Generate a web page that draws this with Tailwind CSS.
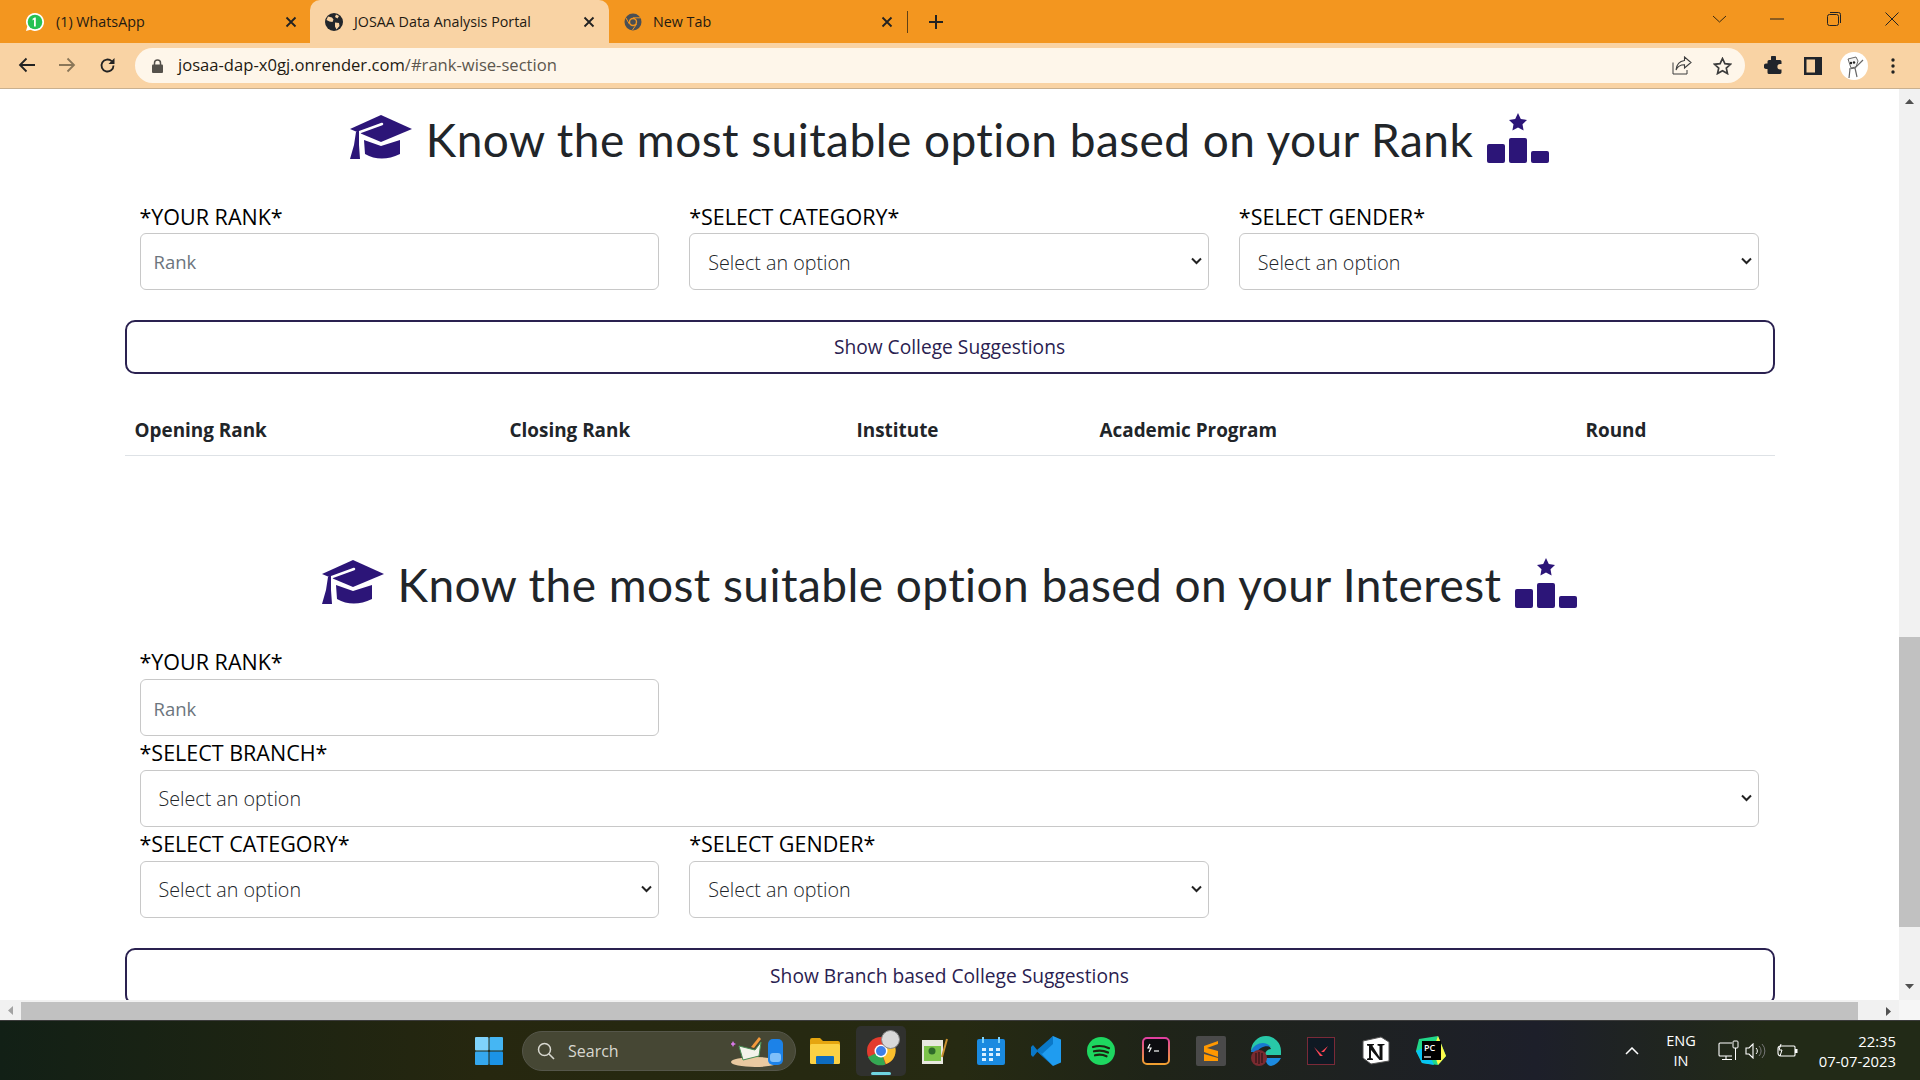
<!DOCTYPE html>
<html lang="en">
<head>
    <meta charset="UTF-8">
    <title>JOSAA Data Analysis Portal</title>
    <script src="https://cdn.jsdelivr.net/npm/@tailwindcss/browser@4"></script>
</head>
<body class="h-[1080px] w-[1920px] overflow-hidden flex flex-col bg-white font-['Open_Sans',sans-serif] text-[#212529]">

    <!-- tab strip -->
    <div class="h-[43px] bg-[#f3961f] flex items-stretch shrink-0 text-[14.3px] text-[#1f1a12]">
        <div class="w-[310px] flex items-center pl-[25px] pr-[13px] gap-[11px]">
            <svg class="w-[20px] h-[20px] shrink-0" viewBox="0 0 20 20"><path d="M10 1a9 9 0 0 0-7.7 13.6L1 19l4.5-1.2A9 9 0 1 0 10 1z" fill="#fff"/><circle cx="10" cy="10" r="7.3" fill="#25c153"/><path d="M10.8 5.5v9H9V7.6L7.6 8.4V6.7l2-1.2z" fill="#fff"/></svg>
            <span class="flex-1">(1) WhatsApp</span>
            <svg class="w-[12px] h-[12px]" viewBox="0 0 12 12"><path d="M1.5 1.5l9 9M10.5 1.5l-9 9" stroke="#222" stroke-width="1.8"/></svg>
        </div>
        <div class="w-[299px] bg-[#f9d3a4] rounded-t-[10px] flex items-center pl-[15px] pr-[14px] gap-[11px]">
            <svg class="w-[18px] h-[18px] shrink-0" viewBox="0 0 18 18"><circle cx="9" cy="9" r="9" fill="#22262b"/><path d="M3 3.5l4 1 1.5 2-1 2.5-3-.5L1.5 7zM10 9.5l4 .5.5 3-3 3.500-1.500-3zM11 1.500l3 1.500-1.500 2.500-2.500-1.500z" fill="#f9d3a4"/></svg>
            <span class="flex-1">JOSAA Data Analysis Portal</span>
            <svg class="w-[12px] h-[12px]" viewBox="0 0 12 12"><path d="M1.5 1.5l9 9M10.5 1.5l-9 9" stroke="#222" stroke-width="1.8"/></svg>
        </div>
        <div class="w-[298px] flex items-center pl-[15px] pr-[14px] gap-[11px]">
            <svg class="w-[18px] h-[18px] shrink-0" viewBox="0 0 18 18"><circle cx="9" cy="9" r="8.5" fill="#4a4f55"/><circle cx="9" cy="9" r="4.2" fill="#f3961f"/><circle cx="9" cy="9" r="2.8" fill="#4a4f55"/><path d="M9 4.8h7.5M5.4 11.1L2 5M12.6 11.1L8.5 17" stroke="#f3961f" stroke-width="1"/></svg>
            <span class="flex-1">New Tab</span>
            <svg class="w-[12px] h-[12px]" viewBox="0 0 12 12"><path d="M1.5 1.5l9 9M10.5 1.5l-9 9" stroke="#222" stroke-width="1.8"/></svg>
        </div>
        <div class="w-px h-[22px] self-center bg-[#5f4015]"></div>
        <div class="w-[55px] flex items-center justify-center">
            <svg class="w-[14px] h-[14px]" viewBox="0 0 14 14"><path d="M7 0v14M0 7h14" stroke="#222" stroke-width="2"/></svg>
        </div>
        <div class="flex-1"></div>
        <div class="flex items-center w-[212px] pb-[5px]">
            <svg class="w-[15px] h-[8px] ml-[4px]" viewBox="0 0 15 8"><path d="M1 1l6.5 6L14 1" fill="none" stroke="#3a2a10" stroke-width="1"/></svg>
            <svg class="w-[14px] h-[2px] ml-[43px]" viewBox="0 0 14 2"><path d="M0 1h14" stroke="#222" stroke-width="1"/></svg>
            <svg class="w-[14px] h-[14px] ml-[43px]" viewBox="0 0 14 14"><rect x=".5" y="2.5" width="11" height="11" rx="2" fill="none" stroke="#222"/><path d="M3 .5h8.5a2 2 0 0 1 2 2V11" fill="none" stroke="#222"/></svg>
            <svg class="w-[14px] h-[14px] ml-[44px]" viewBox="0 0 14 14"><path d="M.5.5l13 13M13.5.5l-13 13" stroke="#222" stroke-width="1"/></svg>
        </div>
    </div>

    <!-- address bar -->
    <div class="h-[46px] bg-[#f9d3a4] border-b border-[#c9b08f] flex items-center shrink-0">
        <div class="w-[135px] flex items-center pl-[18px] gap-[22px] pb-[1px]">
            <svg class="w-[18px] h-[16px]" viewBox="0 0 18 16"><path d="M17 8H2M8.5 1.5L2 8l6.5 6.5" fill="none" stroke="#222" stroke-width="1.8"/></svg>
            <svg class="w-[18px] h-[16px]" viewBox="0 0 18 16"><path d="M1 8h15M9.5 1.5L16 8l-6.5 6.5" fill="none" stroke="#8a7658" stroke-width="1.8"/></svg>
            <svg class="w-[17px] h-[17px] ml-[1px]" viewBox="0 0 17 17"><path d="M14.5 8.5a6 6 0 1 1-1.8-4.3" fill="none" stroke="#222" stroke-width="1.8"/><path d="M15.5 1v6h-6z" fill="#222"/></svg>
        </div>
        <div class="w-[1610px] h-[35px] rounded-full bg-[#fef6ea] flex items-center pl-[17px] pr-[13px]">
            <svg class="w-[11px] h-[14px] shrink-0" viewBox="0 0 11 14"><path d="M2.5 6V4a3 3 0 0 1 6 0v2" fill="none" stroke="#55514b" stroke-width="1.5"/><rect y="5.5" width="11" height="8.5" rx="1" fill="#55514b"/></svg>
            <span class="ml-[15px] text-[16.6px] text-[#1f1a12] flex-1">josaa-dap-x0gj.onrender.com<span class="text-[#5c564e]">/#rank-wise-section</span></span>
            <svg class="w-[20px] h-[19px]" viewBox="0 0 20 19"><path d="M1 6.5V18h14v-4" fill="none" stroke="#3d3d3d" stroke-width="1"/><path d="M12.5 1l6.5 5.5-6.500 5.500V8.800C8 8.800 5.500 10.500 4 14c.5-5 3.500-8.800 8.500-9.500z" fill="none" stroke="#3d3d3d" stroke-width="1.1"/></svg>
            <svg class="w-[19px] h-[18px] ml-[21px]" viewBox="0 0 19 18"><path d="M9.5 1.5l2.4 5.2 5.6.6-4.2 3.8 1.2 5.5-5-2.8-5 2.8 1.2-5.5L1.5 7.3l5.6-.6z" fill="none" stroke="#3d3d3d" stroke-width="1.7"/></svg>
        </div>
        <div class="flex items-center pl-[19px]">
            <svg class="w-[19px] h-[19px]" viewBox="0 0 19 19"><path d="M7 1.5a2.5 2.5 0 0 1 5 0V4h4a1.5 1.5 0 0 1 1.5 1.5V8h-1.300a2.800 2.800 0 0 0 0 5.600h1.300v3A1.500 1.500 0 0 1 16 18H5a1.500 1.500 0 0 1-1.500-1.500V13H2.500a2.800 2.800 0 0 1 0-5.600h1V5.500A1.500 1.500 0 0 1 5 4h2z" fill="#20242b"/></svg>
            <svg class="w-[18px] h-[18px] ml-[21px]" viewBox="0 0 18 18"><rect width="18" height="18" fill="#20242b"/><rect x="2.5" y="2.5" width="8.5" height="13" fill="#f9d3a4"/></svg>
            <div class="w-[28px] h-[28px] rounded-full bg-white ml-[18px] flex items-center justify-center overflow-hidden">
                <svg class="w-[26px] h-[26px]" viewBox="0 0 26 26"><path d="M7 6l8-2 2 4-2 6-5 1z" fill="#f4f4f4" stroke="#444" stroke-width=".8"/><circle cx="10" cy="10" r="1.2" fill="#222"/><circle cx="13" cy="9.5" r="1.2" fill="#222"/><path d="M8 16l6-1 8-8M9 16l-1 9M14 15l2 9" fill="none" stroke="#666" stroke-width="1.2"/></svg>
            </div>
            <svg class="w-[4px] h-[16px] ml-[23px]" viewBox="0 0 4 16"><circle cx="2" cy="2" r="1.7" fill="#222"/><circle cx="2" cy="8" r="1.7" fill="#222"/><circle cx="2" cy="14" r="1.7" fill="#222"/></svg>
        </div>
    </div>

    <!-- page viewport -->
    <div class="flex-1 min-h-0 flex overflow-hidden">
        <main class="flex-1 min-w-0 overflow-hidden">
            <div class="w-[1650px] mx-auto">

                <!-- rank section -->
                <h2 class="h-[117px] pb-[15px] flex items-center justify-center gap-[14px] text-[46px] leading-none font-['Lato',sans-serif] tracking-[0.45px]">
                    <svg class="w-[62px] h-[46px] mb-[4px]" viewBox="0 0 62 46" fill="#2c1578"><path d="M0 14L31 0l31 14-31 13z"/><path d="M9 20l1-3 22-8" fill="none" stroke="#fff" stroke-width="2.5" stroke-linecap="round"/><path d="M14 25l17 6 19-6v14q-19 9-35 0z"/><path d="M6 17l3-1v14l1 14H0l4-14z"/></svg>
                    <span>Know the most suitable option based on your Rank</span>
                    <svg class="w-[62px] h-[50px] mb-[4px]" viewBox="0 0 62 50" fill="#2c1578"><path d="M31 0l2.8 6 6.2.9-4.500 4.400 1.100 6.200-5.600-3-5.600 3 1.100-6.200L22 6.900l6.200-.9z"/><rect y="31" width="18" height="19" rx="2"/><rect x="22" y="25" width="18" height="25" rx="2"/><rect x="44" y="38" width="18" height="12" rx="2"/></svg>
                </h2>

                <div class="pl-[15px] pr-[16px] grid grid-cols-3 gap-x-[30px]">
                    <div>
                        <label class="block h-[27px] text-[21.5px] leading-[22px] font-medium text-black">*YOUR RANK*</label>
                        <input type="text" placeholder="Rank" class="w-full h-[57px] border border-[#c8c8c8] rounded-[6px] px-[13px] text-[18.5px] placeholder:text-[#6c757d]">
                    </div>
                    <div>
                        <label class="block h-[27px] text-[21.5px] leading-[22px] font-medium text-black">*SELECT CATEGORY*</label>
                        <div class="relative">
                            <select class="w-full h-[57px] border border-[#c8c8c8] rounded-[6px] pl-[18px] pt-[3px] text-[19.7px] font-light appearance-none bg-white"><option>Select an option</option></select>
                            <svg class="absolute right-[7px] top-[24px] w-[11px] h-[8px]" viewBox="0 0 11 8"><path d="M1 1.5L5.5 6 10 1.5" fill="none" stroke="#222" stroke-width="2"/></svg>
                        </div>
                    </div>
                    <div>
                        <label class="block h-[27px] text-[21.5px] leading-[22px] font-medium text-black">*SELECT GENDER*</label>
                        <div class="relative">
                            <select class="w-full h-[57px] border border-[#c8c8c8] rounded-[6px] pl-[18px] pt-[3px] text-[19.7px] font-light appearance-none bg-white"><option>Select an option</option></select>
                            <svg class="absolute right-[7px] top-[24px] w-[11px] h-[8px]" viewBox="0 0 11 8"><path d="M1 1.5L5.5 6 10 1.5" fill="none" stroke="#222" stroke-width="2"/></svg>
                        </div>
                    </div>
                </div>

                <button class="block w-full h-[54px] mt-[30px] border-[2.5px] border-[#2a2150] rounded-[10px] text-[19.2px] text-[#2a2150]">Show College Suggestions</button>

                <table class="w-full table-fixed mt-[31px]">
                    <thead>
                        <tr class="h-[50px] border-b border-[#dee2e6] text-left text-[18.9px]">
                            <th class="w-[375px] pl-[10px] font-bold">Opening Rank</th>
                            <th class="w-[347px] pl-[10px] font-bold">Closing Rank</th>
                            <th class="w-[243px] pl-[10px] font-bold">Institute</th>
                            <th class="w-[486px] pl-[10px] font-bold">Academic Program</th>
                            <th class="pl-[10px] font-bold">Round</th>
                        </tr>
                    </thead>
                </table>

                <!-- interest section -->
                <h2 class="h-[117px] mt-[79px] pb-[16px] flex items-center justify-center gap-[14px] text-[46px] leading-none font-['Lato',sans-serif] tracking-[0.45px]">
                    <svg class="w-[62px] h-[46px] mb-[4px]" viewBox="0 0 62 46" fill="#2c1578"><path d="M0 14L31 0l31 14-31 13z"/><path d="M9 20l1-3 22-8" fill="none" stroke="#fff" stroke-width="2.5" stroke-linecap="round"/><path d="M14 25l17 6 19-6v14q-19 9-35 0z"/><path d="M6 17l3-1v14l1 14H0l4-14z"/></svg>
                    <span>Know the most suitable option based on your Interest</span>
                    <svg class="w-[62px] h-[50px] mb-[4px]" viewBox="0 0 62 50" fill="#2c1578"><path d="M31 0l2.8 6 6.2.9-4.500 4.400 1.100 6.200-5.600-3-5.600 3 1.100-6.200L22 6.900l6.200-.9z"/><rect y="31" width="18" height="19" rx="2"/><rect x="22" y="25" width="18" height="25" rx="2"/><rect x="44" y="38" width="18" height="12" rx="2"/></svg>
                </h2>

                <div class="pl-[15px] pr-[16px] grid grid-cols-3 gap-x-[30px]">
                    <div>
                        <label class="block h-[27px] text-[21.5px] leading-[20px] font-medium text-black">*YOUR RANK*</label>
                        <input type="text" placeholder="Rank" class="w-full h-[57px] border border-[#c8c8c8] rounded-[6px] px-[13px] pt-[2px] text-[18.5px] placeholder:text-[#6c757d]">
                    </div>
                    <div class="col-span-3 pt-[4px]">
                        <label class="block h-[30px] text-[21.5px] leading-[26px] font-medium text-black">*SELECT BRANCH*</label>
                        <div class="relative">
                            <select class="w-full h-[57px] border border-[#c8c8c8] rounded-[6px] pl-[18px] pt-[2px] text-[19.7px] font-light appearance-none bg-white"><option>Select an option</option></select>
                            <svg class="absolute right-[7px] top-[24px] w-[11px] h-[8px]" viewBox="0 0 11 8"><path d="M1 1.5L5.5 6 10 1.5" fill="none" stroke="#222" stroke-width="2"/></svg>
                        </div>
                    </div>
                    <div class="pt-[4px]">
                        <label class="block h-[30px] text-[21.5px] leading-[26px] font-medium text-black">*SELECT CATEGORY*</label>
                        <div class="relative">
                            <select class="w-full h-[57px] border border-[#c8c8c8] rounded-[6px] pl-[18px] pt-[2px] text-[19.7px] font-light appearance-none bg-white"><option>Select an option</option></select>
                            <svg class="absolute right-[7px] top-[24px] w-[11px] h-[8px]" viewBox="0 0 11 8"><path d="M1 1.5L5.5 6 10 1.5" fill="none" stroke="#222" stroke-width="2"/></svg>
                        </div>
                    </div>
                    <div class="pt-[4px]">
                        <label class="block h-[30px] text-[21.5px] leading-[26px] font-medium text-black">*SELECT GENDER*</label>
                        <div class="relative">
                            <select class="w-full h-[57px] border border-[#c8c8c8] rounded-[6px] pl-[18px] pt-[2px] text-[19.7px] font-light appearance-none bg-white"><option>Select an option</option></select>
                            <svg class="absolute right-[7px] top-[24px] w-[11px] h-[8px]" viewBox="0 0 11 8"><path d="M1 1.5L5.5 6 10 1.5" fill="none" stroke="#222" stroke-width="2"/></svg>
                        </div>
                    </div>
                </div>

                <button class="block w-full h-[57px] mt-[30px] border-[2.5px] border-[#2a2150] rounded-[10px] text-[19.2px] text-[#2a2150]">Show Branch based College Suggestions</button>
            </div>
        </main>

        <!-- vertical scrollbar -->
        <div class="w-[21px] shrink-0 bg-[#f1f1f1] flex flex-col items-center">
            <svg class="w-[9px] h-[5px] mt-[10px]" viewBox="0 0 9 5"><path d="M4.5 0L9 5H0z" fill="#505050"/></svg>
            <div class="w-full h-[290px] mt-[533px] bg-[#c1c1c1]"></div>
            <svg class="w-[9px] h-[5px] mt-[57px]" viewBox="0 0 9 5"><path d="M4.5 5L9 0H0z" fill="#505050"/></svg>
        </div>
    </div>

    <!-- horizontal scrollbar -->
    <div class="h-[20px] shrink-0 flex bg-[#f1f1f1]">
        <div class="w-[21px] flex items-center justify-center"><svg class="w-[5px] h-[9px]" viewBox="0 0 5 9"><path d="M0 4.5L5 0v9z" fill="#a3a3a3"/></svg></div>
        <div class="w-[1837px] h-[18px] mt-[2px] bg-[#c1c1c1]"></div>
        <div class="w-[41px] flex items-center justify-end pr-[8px] pt-[2px]"><svg class="w-[5px] h-[9px]" viewBox="0 0 5 9"><path d="M5 4.5L0 0v9z" fill="#505050"/></svg></div>
        <div class="w-[21px] bg-[#f6f6f6]"></div>
    </div>

    <!-- windows taskbar -->
    <div class="h-[60px] shrink-0 border-t border-[#3b3b3b] bg-[linear-gradient(90deg,#122016_0%,#26270f_25%,#262a12_50%,#1f2418_60%,#1d1f2a_80%,#222a17_92%,#222a17_100%)] flex items-center text-white">
        <div class="w-[475px] shrink-0"></div>
        <svg class="w-[28px] h-[28px] shrink-0" viewBox="0 0 28 28"><rect width="13.5" height="13.5" rx="1" fill="#7fd3fb"/><rect x="14.5" width="13.5" height="13.5" rx="1" fill="#45b6f3"/><rect y="14.5" width="13.5" height="13.5" rx="1" fill="#35a8ee"/><rect x="14.5" y="14.5" width="13.5" height="13.5" rx="1" fill="#1b93e6"/></svg>

        <div class="w-[274px] h-[40px] ml-[19px] rounded-full bg-[#464734] border border-[#55564a] flex items-center pl-[14px] text-[#d8d8d0] text-[16px] gap-[13px] shrink-0">
            <svg class="w-[18px] h-[18px]" viewBox="0 0 18 18"><circle cx="7.5" cy="7.5" r="6" fill="none" stroke="#d8d8d0" stroke-width="1.5"/><path d="M12 12l5 5" stroke="#d8d8d0" stroke-width="1.6"/></svg>
            <span class="flex-1">Search</span>
            <svg class="w-[58px] h-[34px] mr-[6px]" viewBox="0 0 58 34"><ellipse cx="24" cy="28" rx="24" ry="5" fill="#e9c9a0"/><path d="M8 12l16 4 6-8-2 14-16 4z" fill="#f3f3ea" stroke="#4a8f55" stroke-width="1"/><path d="M2 7l1 2 2 1-2 1-1 2-1-2-2-1 2-1z" fill="#d878e8"/><path d="M28 3l2 2-7 9-3-1z" fill="#f49a3c"/><rect x="37" y="5" width="15" height="26" rx="5" fill="#1c82e8"/><rect x="39" y="19" width="11" height="9" rx="3" fill="#7fc0fa"/></svg>
        </div>

        <div class="ml-[13px] w-[32px] flex justify-center shrink-0">
            <svg class="w-[30px] h-[27px]" viewBox="0 0 30 27"><path d="M0 3a2 2 0 0 1 2-2h8l3 3h15a2 2 0 0 1 2 2v4H0z" fill="#e5a50f"/><rect y="7" width="30" height="20" rx="1.5" fill="#fbd144"/><rect x="6" y="19" width="18" height="8" rx="1" fill="#0d6cc0"/></svg>
        </div>
        <div class="ml-[15px] w-[50px] h-[50px] rounded-[5px] bg-[#30312e] flex flex-col items-center justify-center relative shrink-0">
            <svg class="w-[30px] h-[30px]" viewBox="0 0 30 30"><circle cx="15" cy="15" r="14" fill="#e33b2e"/><path d="M15 15L28 8a14 14 0 0 1-8 20z" fill="#fbc02d"/><path d="M15 15l4.5 13.5A14 14 0 0 1 2 21z" fill="#34a853"/><circle cx="15" cy="15" r="6.5" fill="#fff"/><circle cx="15" cy="15" r="5" fill="#3f7fe8"/></svg>
            <div class="absolute top-[4px] right-[6px] w-[19px] h-[19px] rounded-full bg-[#d8d8d8] border border-[#888]"></div>
            <div class="absolute bottom-[1px] w-[20px] h-[3px] rounded-full bg-[#6fd5df]"></div>
        </div>
        <div class="ml-[6px] w-[44px] flex justify-center shrink-0">
            <svg class="w-[28px] h-[28px]" viewBox="0 0 28 28"><rect x="2" y="3" width="21" height="24" fill="#e8e8e0"/><rect x="4" y="9" width="17" height="15" fill="#7cc34a"/><circle cx="12" cy="14" r="3.5" fill="#2f6b2a"/><path d="M22 20L27 2" stroke="#c89030" stroke-width="2"/></svg>
        </div>
        <div class="ml-[13px] w-[44px] flex justify-center shrink-0">
            <svg class="w-[28px] h-[28px]" viewBox="0 0 28 28"><rect y="2" width="28" height="26" rx="2" fill="#1a8ae0"/><rect x="5" width="2" height="6" fill="#7fd3fb"/><rect x="21" width="2" height="6" fill="#7fd3fb"/><path d="M5 11h4v3H5zM12 11h4v3h-4zM19 11h4v3h-4zM5 16h4v3H5zM12 16h4v3h-4zM19 16h4v3h-4zM5 21h4v3H5zM12 21h4v3h-4z" fill="#d9efff"/></svg>
        </div>
        <div class="ml-[11px] w-[44px] flex justify-center shrink-0">
            <svg class="w-[30px] h-[30px]" viewBox="0 0 30 30"><path d="M22 0l8 3.5v23L22 30 8 16.5z" fill="#1f9cf0"/><path d="M22 0L6 14l5 4L22 8z" fill="#0a78c8"/><path d="M22 30L1 11l-1 2 5 3 2-2 15 16z" fill="#0a78c8"/><path d="M2 9L0 11v8l2 2 5-6z" fill="#0a78c8"/></svg>
        </div>
        <div class="ml-[11px] w-[44px] flex justify-center shrink-0">
            <svg class="w-[28px] h-[28px]" viewBox="0 0 28 28"><circle cx="14" cy="14" r="14" fill="#1ed760"/><path d="M6 10c5-1.5 11-1.200 16 1.200M7 14.300c4.500-1.200 9.500-1 14 1.200M8 18.300c4-1 8-.7 11.500 1" fill="none" stroke="#1d2410" stroke-width="2.2" stroke-linecap="round"/></svg>
        </div>
        <div class="ml-[11px] w-[44px] flex justify-center shrink-0">
            <svg class="w-[28px] h-[28px]" viewBox="0 0 28 28"><defs><linearGradient id="term" x1="0" y1="0" x2="0" y2="1"><stop offset="0" stop-color="#e040a0"/><stop offset="1" stop-color="#f0a030"/></linearGradient></defs><rect x="1" y="1" width="26" height="26" rx="4" fill="#0c0c10" stroke="url(#term)" stroke-width="2"/><path d="M8 7L6 11h3l-2 4" fill="none" stroke="#fff" stroke-width="1.2"/><path d="M12 14h5" stroke="#fff" stroke-width="1.2"/></svg>
        </div>
        <div class="ml-[11px] w-[44px] flex justify-center shrink-0">
            <svg class="w-[30px] h-[30px]" viewBox="0 0 30 30"><rect width="30" height="30" rx="2" fill="#4a4a4a"/><path d="M22 5L8 10v6l14 5v-6L11 12l11-4zM8 18l14 4v3L8 25z" fill="#ff9800"/></svg>
        </div>
        <div class="ml-[11px] w-[44px] flex justify-center shrink-0">
            <svg class="w-[30px] h-[30px]" viewBox="0 0 30 30"><path d="M0 15a15 15 0 0 1 30 0v4H14a6 6 0 0 1 6-6C18 7 8 6 0 15z" fill="#28c8a8"/><path d="M0 15C4 7 14 4 20 11c-6-2-12 1-14 5H0z" fill="#1878d0"/><path d="M14 22h16a15 15 0 0 1-10 8c-3 0-5-3-6-8z" fill="#1c8ae0"/><circle cx="8" cy="22" r="8" fill="#7a2a30"/><path d="M5 17v10M8 16v12M11 17v10" stroke="#2a1416" stroke-width="1.2"/></svg>
        </div>
        <div class="ml-[11px] w-[44px] flex justify-center shrink-0">
            <svg class="w-[28px] h-[28px]" viewBox="0 0 28 28"><rect x=".5" y=".5" width="27" height="27" fill="#0f1923" stroke="#7a2a38"/><path d="M7 10l6 9h3zM21 9l-4 6h-3z" fill="#ff4655"/></svg>
        </div>
        <div class="ml-[11px] w-[44px] flex justify-center shrink-0">
            <svg class="w-[28px] h-[29px]" viewBox="0 0 28 29"><path d="M1 5L19 1l8 5v19l-18 3-8-6z" fill="#fff" stroke="#555" stroke-width="1"/><path d="M5 8h7v1l-1.5.5V10l7 11V10l-2-.5V8h7v1l-2 .5V24h-3L9 14v8l2 .7V24H5v-1.3l2-.7V10l-2-.5z" fill="#111"/></svg>
        </div>
        <div class="ml-[11px] w-[44px] flex justify-center shrink-0">
            <svg class="w-[30px] h-[30px]" viewBox="0 0 30 30"><path d="M3 3L22 0l8 20-8 9-16-2L0 15z" fill="#21d789"/><path d="M22 0l8 20-8 9-5-15z" fill="#fcf84a"/><path d="M0 15l6 12 12 2-8-18z" fill="#07c3f2"/><rect x="6" y="5" width="19" height="19" fill="#000"/><text x="8" y="15" fill="#fff" font-size="9" font-family="Open Sans" font-weight="600">PC</text><path d="M8 21h7" stroke="#fff" stroke-width="1.2"/></svg>
        </div>

        <div class="flex-1"></div>
        <svg class="w-[14px] h-[8px] shrink-0" viewBox="0 0 14 8"><path d="M1 7l6-6 6 6" fill="none" stroke="#fff" stroke-width="1.5"/></svg>
        <div class="w-[32px] ml-[26px] text-center text-[14.5px] leading-[20px] shrink-0"><div>ENG</div><div>IN</div></div>
        <svg class="w-[21px] h-[21px] ml-[21px] shrink-0" viewBox="0 0 21 21"><path d="M14 3H2a1 1 0 0 0-1 1v11a1 1 0 0 0 1 1h12M8 16v3M4 19.5h10" fill="none" stroke="#fff" stroke-width="1.1"/><rect x="15" y="1" width="5" height="7" rx="1" fill="none" stroke="#fff"/><path d="M17.5 8v12" stroke="#fff"/></svg>
        <svg class="w-[21px] h-[16px] ml-[6px] shrink-0" viewBox="0 0 21 16"><path d="M1 5h3l4-4v14l-4-4H1z" fill="none" stroke="#fff" stroke-width="1.1"/><path d="M11 5a4 4 0 0 1 0 6" fill="none" stroke="#fff"/><path d="M14 3a7 7 0 0 1 0 10M17 1a10 10 0 0 1 0 14" fill="none" stroke="#777"/></svg>
        <svg class="w-[21px] h-[16px] ml-[11px] shrink-0" viewBox="0 0 21 16"><path d="M4 3h13a1 1 0 0 1 1 1v8a1 1 0 0 1-1 1H4a3 3 0 0 1-3-3V6a3 3 0 0 1 3-3z" fill="none" stroke="#fff" stroke-width="1.1"/><rect x="18" y="6" width="2.5" height="4" fill="#fff"/><path d="M4 1L2 7h3l-2 6" fill="none" stroke="#fff"/></svg>
        <div class="w-[90px] ml-[8px] mr-[24px] text-right text-[14.8px] leading-[20px] shrink-0 whitespace-nowrap"><div>22:35</div><div class="-ml-[10px]">07-07-2023</div></div>
    </div>

</body>
</html>
